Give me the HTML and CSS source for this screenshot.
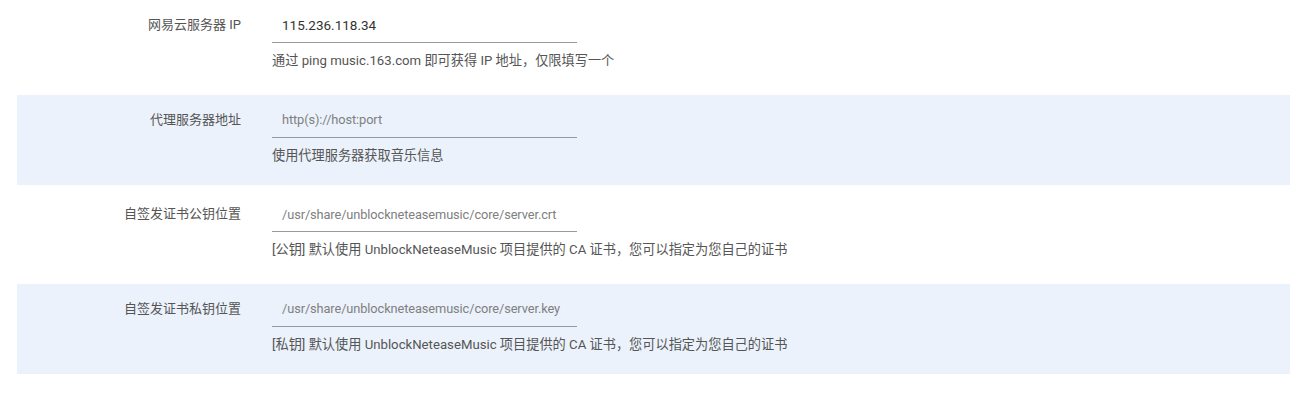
FILE: index.html
```html
<!DOCTYPE html>
<html lang="zh-CN">
<head>
    <meta charset="UTF-8">
    <meta name="viewport" content="width=device-width, initial-scale=1.0">
    <title>UnblockNeteaseMusic 设置</title>
    <link rel="stylesheet" href="styles.css">
</head>
<body>
    <div class="settings">
        <div class="row">
            <label class="row-label" for="ip">网易云服务器 IP</label>
            <div class="row-field">
                <input type="text" id="ip" class="field-input" value="115.236.118.34">
                <div class="field-help">通过 ping music.163.com 即可获得 IP 地址，仅限填写一个</div>
            </div>
        </div>
        <div class="row alt">
            <label class="row-label" for="proxy">代理服务器地址</label>
            <div class="row-field">
                <input type="text" id="proxy" class="field-input" placeholder="http(s)://host:port">
                <div class="field-help">使用代理服务器获取音乐信息</div>
            </div>
        </div>
        <div class="row">
            <label class="row-label" for="crt">自签发证书公钥位置</label>
            <div class="row-field">
                <input type="text" id="crt" class="field-input" placeholder="/usr/share/unblockneteasemusic/core/server.crt">
                <div class="field-help">[公钥] 默认使用 UnblockNeteaseMusic 项目提供的 CA 证书，您可以指定为您自己的证书</div>
            </div>
        </div>
        <div class="row alt">
            <label class="row-label" for="key">自签发证书私钥位置</label>
            <div class="row-field">
                <input type="text" id="key" class="field-input" placeholder="/usr/share/unblockneteasemusic/core/server.key">
                <div class="field-help">[私钥] 默认使用 UnblockNeteaseMusic 项目提供的 CA 证书，您可以指定为您自己的证书</div>
            </div>
        </div>
    </div>
</body>
</html>
```

FILE: styles.css
```css
body {
    margin: 0;
    background: #fff;
    font-family: Roboto, "Noto Sans CJK SC", sans-serif;
    font-size: 13px;
    color: #555;
}
.settings {
    display: flex;
    flex-direction: column;
    gap: 4.5px;
    padding-left: 17px;
}
.row {
    display: flex;
    height: 90px;
    box-sizing: border-box;
}
.row.alt {
    background-color: #ebf2fc;
}
.row-label {
    width: 224px;
    padding-top: 14px;
    line-height: 22px;
    text-align: right;
    color: #555;
}
.row-field {
    margin-left: 31px;
    display: flex;
    flex-direction: column;
}
.field-input {
    width: 305px;
    height: 36px;
    margin-top: 7px;
    padding: 0 0 0 10px;
    box-sizing: border-box;
    border: none;
    border-bottom: 1px solid #999;
    background: transparent;
    font-family: inherit;
    font-size: 13.5px;
    color: #333;
    outline: none;
}
.field-input::placeholder {
    font-size: 12.8px;
    letter-spacing: -0.1px;
    color: #808080;
}
.field-help {
    margin-top: 8px;
    line-height: 20px;
    font-size: 13.2px;
    color: #555;
}
```
